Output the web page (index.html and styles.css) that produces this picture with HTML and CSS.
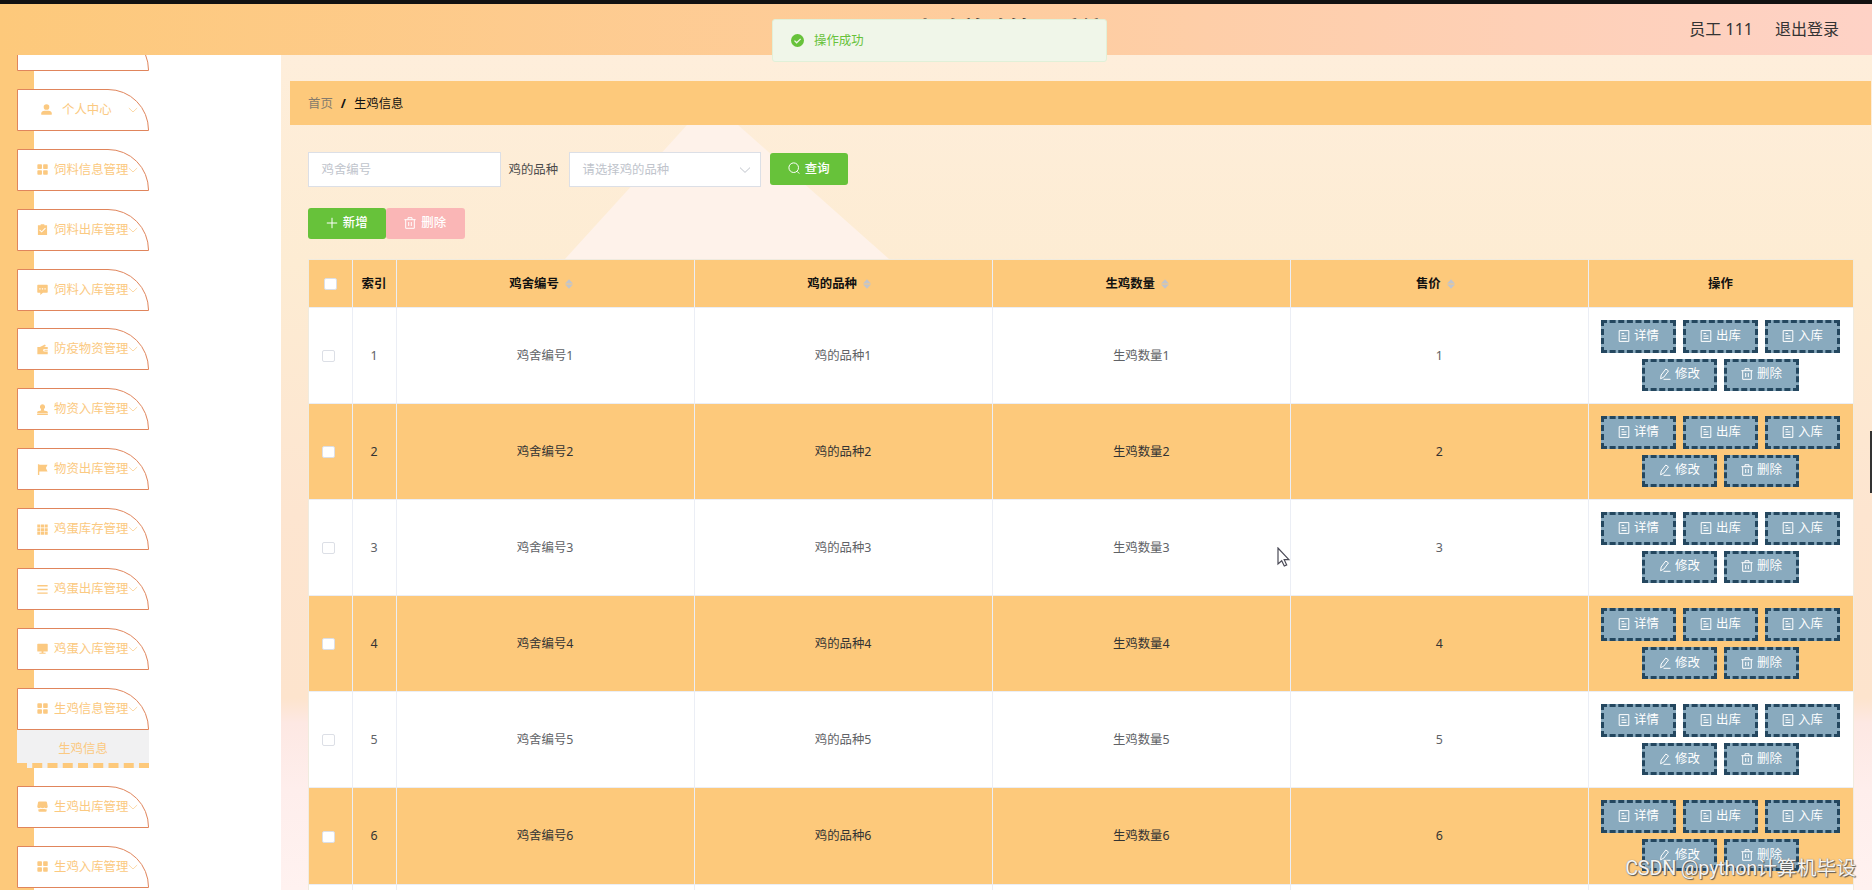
FILE: index.html
```html
<!DOCTYPE html>
<html lang="zh-CN">
<head>
<meta charset="utf-8">
<title>生鸡信息</title>
<link rel="stylesheet" href="styles.css">
</head>
<body>
<svg class="sprite" aria-hidden="true">
  <symbol id="user" viewBox="0 0 12 12"><circle cx="6" cy="3.3" r="3.1"/><path d="M.3 11.8v-1.6Q.3 7.4 4 7.4h4q3.7 0 3.7 2.8v1.6z"/></symbol>
  <symbol id="menu" viewBox="0 0 12 12"><rect x=".4" y=".4" width="5" height="5" rx=".8"/><rect x="6.7" y=".4" width="5" height="5" rx=".8"/><rect x=".4" y="6.7" width="5" height="5" rx=".8"/><rect x="6.7" y="6.7" width="5" height="5" rx=".8"/></symbol>
  <symbol id="claim" viewBox="0 0 12 12"><path fill-rule="evenodd" d="M1 1.4h3V.3h4v1.1h3V12H1zM3.2 6l-.8.9 2.7 2.5 4.5-4.5-.8-.8-3.7 3.7z"/></symbol>
  <symbol id="comment" viewBox="0 0 12 12"><path fill-rule="evenodd" d="M1 .8h10q.7 0 .7.7v7.3q0 .7-.7.7H6.5L3.6 12V9.500H1q-.7 0-.7-.7V1.500Q.3.8 1 .8zM2.500 4.500v1.400h1.400V4.500zM5.300 4.500v1.400h1.400V4.500zM8.100 4.500v1.400h1.400V4.500z"/></symbol>
  <symbol id="wallet" viewBox="0 0 12 12"><path fill-rule="evenodd" d="M3.200 3.300 8.700.5l1 1.700-2.200 1.100h4.200v2.200H8q-1.300 0-1.300 1.300T8 8.100h3.700v3.100H.4V3.300zM8.200 6.200h3.500v1.200H8.200z"/></symbol>
  <symbol id="custom" viewBox="0 0 12 12"><path d="M6 .2a2.900 2.900 0 0 1 1.700 5.200l-.2 1.700 3.500.9q.8.300.8 1.200v.8H.2v-.8q0-.9.8-1.200l3.500-.9-.2-1.700A2.900 2.900 0 0 1 6 .2zM.2 10.700h11.600v1.200H.2z"/></symbol>
  <symbol id="flag" viewBox="0 0 12 12"><path d="M1 .2h1.500v.6h9L9.700 4.400l1.800 3.800h-9V12H1z"/></symbol>
  <symbol id="grid" viewBox="0 0 12 12"><path d="M.3.500h3.300v3.300H.3zM4.300.500h3.400v3.300H4.300zM8.400.500h3.300v3.300H8.400zM.3 4.500h3.300v3.300H.3zM4.300 4.500h3.400v3.300H4.300zM8.400 4.500h3.300v3.300H8.400zM.3 8.500h3.300v3.300H.3zM4.300 8.500h3.400v3.300H4.300zM8.400 8.500h3.300v3.300H8.400z"/></symbol>
  <symbol id="list" viewBox="0 0 12 12"><path d="M.4 1.200h11.200v1.500H.4zM.4 5.200h11.200v1.500H.4zM.4 9.200h11.200v1.500H.4z"/></symbol>
  <symbol id="screen" viewBox="0 0 12 12"><path d="M1 .7h10q.7 0 .7.7v7.200q0 .7-.7.7H7v1.200h2.400v1.200H2.600v-1.200H5V9.300H1q-.7 0-.7-.7V1.400Q.3.700 1 .7z"/></symbol>
  <symbol id="shop" viewBox="0 0 12 12"><path d="M2.200.6h7.600q.9 0 1.100.9l.8 4.500q0 2-1.700 2-1.300 0-1.900-.8-.700.800-2 .8t-2-.8q-.600.800-1.900.8Q.300 8 .3 6l.8-4.500q.2-.9 1.100-.9zM1.500 8.900q1.500.300 2.600-.5 1.900.9 3.800 0 1.100.8 2.600.5v1.700q0 1.100-1.100 1.100H2.600q-1.100 0-1.100-1.100z"/></symbol>
  <symbol id="down" viewBox="0 0 12 12"><path d="m1 3.600 5 4.800 5-4.800" fill="none" stroke="currentColor"/></symbol>
  <symbol id="doc" viewBox="0 0 12 12"><path d="M1.200.6h9.600v10.800H1.200zM3.500 3.500h2.700M3.500 6h5M3.500 8.500h5" fill="none" stroke="currentColor"/></symbol>
  <symbol id="edit" viewBox="0 0 12 12"><path d="m2.200 7 4.600-6 2.700 1.900-4.700 6.200-3.200 1.700zM4.500 11.300h7" fill="none" stroke="currentColor"/></symbol>
  <symbol id="trash" viewBox="0 0 12 12"><path d="M.4 2.700h11.200M4 2.500V.7h4v1.800M1.700 2.700v8.600h8.600V2.700M4.700 5v4M7.300 5v4" fill="none" stroke="currentColor"/></symbol>
  <symbol id="plus" viewBox="0 0 12 12"><path d="M6 .8v10.400M.8 6h10.400" fill="none" stroke="currentColor"/></symbol>
  <symbol id="search" viewBox="0 0 12 12"><circle cx="5.700" cy="5.700" r="4.800" fill="none" stroke="currentColor"/><path d="m9 9.300 2.300 2.300" stroke="currentColor"/></symbol>
  <symbol id="sort" viewBox="0 0 8 10"><path d="M0 4.500 4 .3l4 4.200zM0 5.500h8L4 9.700z"/></symbol>
</svg>

<div class="app">
  <header class="header">
    <h1 class="header-title"><span class="header-latin">springboot</span>肉鸡养殖管理系统</h1>
    <div class="header-user"><span>员工 111</span><span>退出登录</span></div>
  </header>
  <div class="body">
    <aside class="sidebar">
      <nav class="menu">
        <div class="menu-item"></div>
        <div class="menu-item menu-item-short"><svg class="icon"><use href="#user"/></svg><span>个人中心</span><svg class="arrow"><use href="#down"/></svg></div>
        <div class="menu-item"><svg class="icon"><use href="#menu"/></svg><span>饲料信息管理</span><svg class="arrow"><use href="#down"/></svg></div>
        <div class="menu-item"><svg class="icon"><use href="#claim"/></svg><span>饲料出库管理</span><svg class="arrow"><use href="#down"/></svg></div>
        <div class="menu-item"><svg class="icon"><use href="#comment"/></svg><span>饲料入库管理</span><svg class="arrow"><use href="#down"/></svg></div>
        <div class="menu-item"><svg class="icon"><use href="#wallet"/></svg><span>防疫物资管理</span><svg class="arrow"><use href="#down"/></svg></div>
        <div class="menu-item"><svg class="icon"><use href="#custom"/></svg><span>物资入库管理</span><svg class="arrow"><use href="#down"/></svg></div>
        <div class="menu-item"><svg class="icon"><use href="#flag"/></svg><span>物资出库管理</span><svg class="arrow"><use href="#down"/></svg></div>
        <div class="menu-item"><svg class="icon"><use href="#grid"/></svg><span>鸡蛋库存管理</span><svg class="arrow"><use href="#down"/></svg></div>
        <div class="menu-item"><svg class="icon"><use href="#list"/></svg><span>鸡蛋出库管理</span><svg class="arrow"><use href="#down"/></svg></div>
        <div class="menu-item"><svg class="icon"><use href="#screen"/></svg><span>鸡蛋入库管理</span><svg class="arrow"><use href="#down"/></svg></div>
        <div class="menu-item menu-item-open"><svg class="icon"><use href="#menu"/></svg><span>生鸡信息管理</span><svg class="arrow"><use href="#down"/></svg></div>
        <div class="submenu-item">生鸡信息</div>
        <div class="menu-item"><svg class="icon"><use href="#shop"/></svg><span>生鸡出库管理</span><svg class="arrow"><use href="#down"/></svg></div>
        <div class="menu-item"><svg class="icon"><use href="#menu"/></svg><span>生鸡入库管理</span><svg class="arrow"><use href="#down"/></svg></div>
      </nav>
    </aside>
    <main class="main">
      <div class="breadcrumb"><span class="crumb-home">首页</span><b>/</b><span>生鸡信息</span></div>
      <div class="search-row">
        <div class="input">鸡舍编号</div>
        <label class="label">鸡的品种</label>
        <div class="input select"><span>请选择鸡的品种</span><svg class="icon"><use href="#down"/></svg></div>
        <div class="btn btn-search"><svg class="icon"><use href="#search"/></svg>查询</div>
      </div>
      <div class="action-row">
        <div class="btn"><svg class="icon"><use href="#plus"/></svg>新增</div>
        <div class="btn btn-disabled"><svg class="icon"><use href="#trash"/></svg>删除</div>
      </div>
      <div class="table">
        <div class="row head">
          <div class="cell"><i class="check"></i></div><div class="cell">索引</div>
          <div class="cell sortable">鸡舍编号<svg class="sort"><use href="#sort"/></svg></div>
          <div class="cell sortable">鸡的品种<svg class="sort"><use href="#sort"/></svg></div>
          <div class="cell sortable">生鸡数量<svg class="sort"><use href="#sort"/></svg></div>
          <div class="cell sortable">售价<svg class="sort"><use href="#sort"/></svg></div>
          <div class="cell">操作</div>
        </div>
        <div class="row"><div class="cell"><i class="check"></i></div><div class="cell">1</div><div class="cell">鸡舍编号1</div><div class="cell">鸡的品种1</div><div class="cell">生鸡数量1</div><div class="cell">1</div>
          <div class="cell ops"><span class="op"><svg class="icon"><use href="#doc"/></svg>详情</span><span class="op"><svg class="icon"><use href="#doc"/></svg>出库</span><span class="op"><svg class="icon"><use href="#doc"/></svg>入库</span><span class="op"><svg class="icon"><use href="#edit"/></svg>修改</span><span class="op"><svg class="icon"><use href="#trash"/></svg>删除</span></div></div>
        <div class="row striped"><div class="cell"><i class="check"></i></div><div class="cell">2</div><div class="cell">鸡舍编号2</div><div class="cell">鸡的品种2</div><div class="cell">生鸡数量2</div><div class="cell">2</div>
          <div class="cell ops"><span class="op"><svg class="icon"><use href="#doc"/></svg>详情</span><span class="op"><svg class="icon"><use href="#doc"/></svg>出库</span><span class="op"><svg class="icon"><use href="#doc"/></svg>入库</span><span class="op"><svg class="icon"><use href="#edit"/></svg>修改</span><span class="op"><svg class="icon"><use href="#trash"/></svg>删除</span></div></div>
        <div class="row"><div class="cell"><i class="check"></i></div><div class="cell">3</div><div class="cell">鸡舍编号3</div><div class="cell">鸡的品种3</div><div class="cell">生鸡数量3</div><div class="cell">3</div>
          <div class="cell ops"><span class="op"><svg class="icon"><use href="#doc"/></svg>详情</span><span class="op"><svg class="icon"><use href="#doc"/></svg>出库</span><span class="op"><svg class="icon"><use href="#doc"/></svg>入库</span><span class="op"><svg class="icon"><use href="#edit"/></svg>修改</span><span class="op"><svg class="icon"><use href="#trash"/></svg>删除</span></div></div>
        <div class="row striped"><div class="cell"><i class="check"></i></div><div class="cell">4</div><div class="cell">鸡舍编号4</div><div class="cell">鸡的品种4</div><div class="cell">生鸡数量4</div><div class="cell">4</div>
          <div class="cell ops"><span class="op"><svg class="icon"><use href="#doc"/></svg>详情</span><span class="op"><svg class="icon"><use href="#doc"/></svg>出库</span><span class="op"><svg class="icon"><use href="#doc"/></svg>入库</span><span class="op"><svg class="icon"><use href="#edit"/></svg>修改</span><span class="op"><svg class="icon"><use href="#trash"/></svg>删除</span></div></div>
        <div class="row"><div class="cell"><i class="check"></i></div><div class="cell">5</div><div class="cell">鸡舍编号5</div><div class="cell">鸡的品种5</div><div class="cell">生鸡数量5</div><div class="cell">5</div>
          <div class="cell ops"><span class="op"><svg class="icon"><use href="#doc"/></svg>详情</span><span class="op"><svg class="icon"><use href="#doc"/></svg>出库</span><span class="op"><svg class="icon"><use href="#doc"/></svg>入库</span><span class="op"><svg class="icon"><use href="#edit"/></svg>修改</span><span class="op"><svg class="icon"><use href="#trash"/></svg>删除</span></div></div>
        <div class="row striped"><div class="cell"><i class="check"></i></div><div class="cell">6</div><div class="cell">鸡舍编号6</div><div class="cell">鸡的品种6</div><div class="cell">生鸡数量6</div><div class="cell">6</div>
          <div class="cell ops"><span class="op"><svg class="icon"><use href="#doc"/></svg>详情</span><span class="op"><svg class="icon"><use href="#doc"/></svg>出库</span><span class="op"><svg class="icon"><use href="#doc"/></svg>入库</span><span class="op"><svg class="icon"><use href="#edit"/></svg>修改</span><span class="op"><svg class="icon"><use href="#trash"/></svg>删除</span></div></div>
        <div class="row"><div class="cell"></div><div class="cell"></div><div class="cell"></div><div class="cell"></div><div class="cell"></div><div class="cell"></div><div class="cell"></div></div>
      </div>
    </main>
  </div>
  <div class="toast"><svg class="toast-icon" viewBox="0 0 12 12"><circle cx="6" cy="6" r="6" fill="#67c23a"/><path d="m3.200 6.100 2 2L8.900 4.500" fill="none" stroke="#f0f6e9" stroke-width="1.200"/></svg>操作成功</div>
  <svg class="cursor" viewBox="0 0 13 20"><path d="M1 1v16l3.700-3.300 2.600 5.300 2.400-1.100-2.500-5.200h4.700z" fill="#fff" stroke="#4b4b57" stroke-width="1.200"/></svg>
  <div class="scroll-thumb"></div>
  <div class="watermark"><span class="watermark-latin">CSDN @python</span>计算机毕设</div>
</div>
</body>
</html>
```
FILE: styles.css
```css
* { box-sizing: border-box; }
body {
  margin: 0;
  font: 12.4px/18px "Noto Sans", "Noto Sans CJK SC", sans-serif;
  color: #606266;
}
.sprite { display: none; }
.app {
  position: relative;
  display: flex;
  flex-direction: column;
  height: 890px;
  overflow: hidden;
}
.icon { width: 12px; height: 12px; fill: currentColor; flex: none; }

.header {
  position: relative;
  flex: none;
  height: 55px;
  border-top: 4px solid #111;
  background: linear-gradient(90deg, #fdc97b, #fecda0 55%, #fed2c6);
  display: flex;
  align-items: center;
  justify-content: center;
}
.header-title {
  margin: 0;
  padding-left: 14px;
  font-size: 24px;
  line-height: 51px;
  font-weight: 700;
  color: #333;
  white-space: nowrap;
}
.header-latin { position: relative; top: -2px; }
.header-user {
  position: absolute;
  right: 33px;
  top: 0;
  display: flex;
  gap: 22px;
  font-size: 16px;
  line-height: 50px;
  color: #333;
}

.body { flex: 1; min-height: 0; display: flex; }
.sidebar {
  flex: none;
  width: 281px;
  overflow: hidden;
  background: linear-gradient(90deg, #fdc97b 34px, #fff 34px);
}
.menu { margin-top: -26px; padding-left: 17px; width: 149px; }
.menu-item {
  position: relative;
  display: flex;
  align-items: center;
  gap: 6px;
  height: 42px;
  margin-bottom: 17.9px;
  padding: 0 0 0 19px;
  border: 1px solid #e0855c;
  border-radius: 0 41px 0 0;
  background: #fff;
  color: #fbc981;
  white-space: nowrap;
}
.menu-item .icon { width: 11px; height: 11px; }
.menu-item-short { padding-left: 23px; gap: 10px; }
.menu-item-open { margin-bottom: 0; }
.arrow {
  position: absolute;
  right: 10px;
  top: 15px;
  width: 10px;
  height: 10px;
  opacity: .8;
}
.submenu-item {
  height: 38px;
  margin-bottom: 18px;
  border-bottom: 5px dashed #fdc97b;
  background: #f1f1f2;
  color: #fbc981;
  text-align: center;
  line-height: 38px;
}

.main {
  position: relative;
  flex: 1;
  min-width: 0;
  padding: 26px 1px 0 9px;
  overflow: hidden;
  background: linear-gradient(180deg, #feeedb 0, #fdecd3 25%, #fde5d0 55%, #fde4cd 77%, #fde8e3 80%, #feeeec 88%, #fff2f0 100%);
}
.main::before {
  content: "";
  position: absolute;
  left: 284px;
  top: 70px;
  width: 324px;
  height: 134px;
  background: #fef2ea;
  clip-path: polygon(122px 0, 173px 0, 324px 100%, 0 100%);
}
.breadcrumb {
  position: relative;
  display: flex;
  gap: 8px;
  height: 44px;
  padding-left: 18px;
  line-height: 45px;
  background: #fdc97b;
  color: #111;
}
.crumb-home { color: #857b6c; }
.search-row {
  position: relative;
  display: flex;
  align-items: flex-start;
  margin: 27px 0 0 17.5px;
  line-height: 33px;
}
.input {
  width: 193px;
  height: 35px;
  padding: 0 13px;
  border: 1px solid #dcdfe6;
  background: #fff;
  color: #c0c4cc;
}
.label { width: 50px; margin: 1px 10px 0 8px; color: #4c4c4c; white-space: nowrap; }
.select { display: flex; justify-content: space-between; align-items: center; width: 192px; padding-right: 9px; }
.btn {
  display: flex;
  align-items: center;
  justify-content: center;
  gap: 5px;
  width: 78.500px;
  height: 31px;
  padding-bottom: 2px;
  border-radius: 3px;
  background: #67c23a;
  color: #fff;
  font-weight: 500;
}
.btn-search { height: 32px; margin: 1px 0 0 9px; }
.btn-disabled { background: #fab6b6; }
.action-row { position: relative; display: flex; margin: 21px 0 0 17.5px; }

.table {
  position: relative;
  width: 1545.500px;
  margin: 20px 0 0 18px;
  border: solid #f0ebdf;
  border-width: 1px 1px 0 1px;
}
.row {
  display: grid;
  grid-template-columns: 44px 44px repeat(4, 298.100px) 1fr;
  height: 96.100px;
  background: #fff;
}
.cell {
  display: flex;
  align-items: center;
  justify-content: center;
  padding: 0 1px 0 0;
  border-right: 1px solid #ebeef5;
  border-bottom: 1px solid #ebeef5;
}
.cell:last-child { border-right: 0; }
.striped { background: #fdc97b; color: #333; }
.head { height: 48px; background: #fdc97b; color: #111; font-weight: 700; }
.sortable { padding-right: 9px; }
.check {
  width: 13px;
  height: 12px;
  margin: 1px 3px 0 0;
  border: 1px solid #dcdfe6;
  border-radius: 2px;
  background: #fff;
}
.head .check { margin-right: 0; }
.sort { width: 8px; height: 10px; margin-left: 6px; fill: #c0c4cc; }
.row .ops {
  flex-wrap: wrap;
  align-content: flex-start;
  gap: 6px 7px;
  padding: 12px 1px 0 0;
}
.op {
  display: flex;
  align-items: center;
  justify-content: center;
  gap: 4px;
  width: 75px;
  height: 32.500px;
  padding-bottom: 1px;
  border: 3px dashed #24475f;
  background: #89aabe;
  color: #fff;
}

.toast {
  position: absolute;
  left: 772px;
  top: 19px;
  width: 335px;
  height: 43px;
  display: flex;
  align-items: center;
  gap: 10px;
  padding: 0 18px;
  border: 1px solid #e1f0d8;
  border-radius: 3px;
  background: #f0f6e9;
  color: #67c23a;
}
.toast-icon { width: 13px; height: 13px; }
.cursor { position: absolute; left: 1277px; top: 547px; width: 13px; height: 20px; }
.scroll-thumb {
  position: absolute;
  right: 0;
  top: 431px;
  width: 2px;
  height: 62px;
  background: #333;
}
.watermark {
  position: absolute;
  right: 16px;
  top: 855px;
  font: 19.800px/28px Roboto, "Noto Sans CJK SC", sans-serif;
  color: #f4f4f4;
  text-shadow: 1px 1px 1px #555, 0 0 1px #777;
  white-space: nowrap;
}
.watermark-latin { letter-spacing: -.2px; }
```
